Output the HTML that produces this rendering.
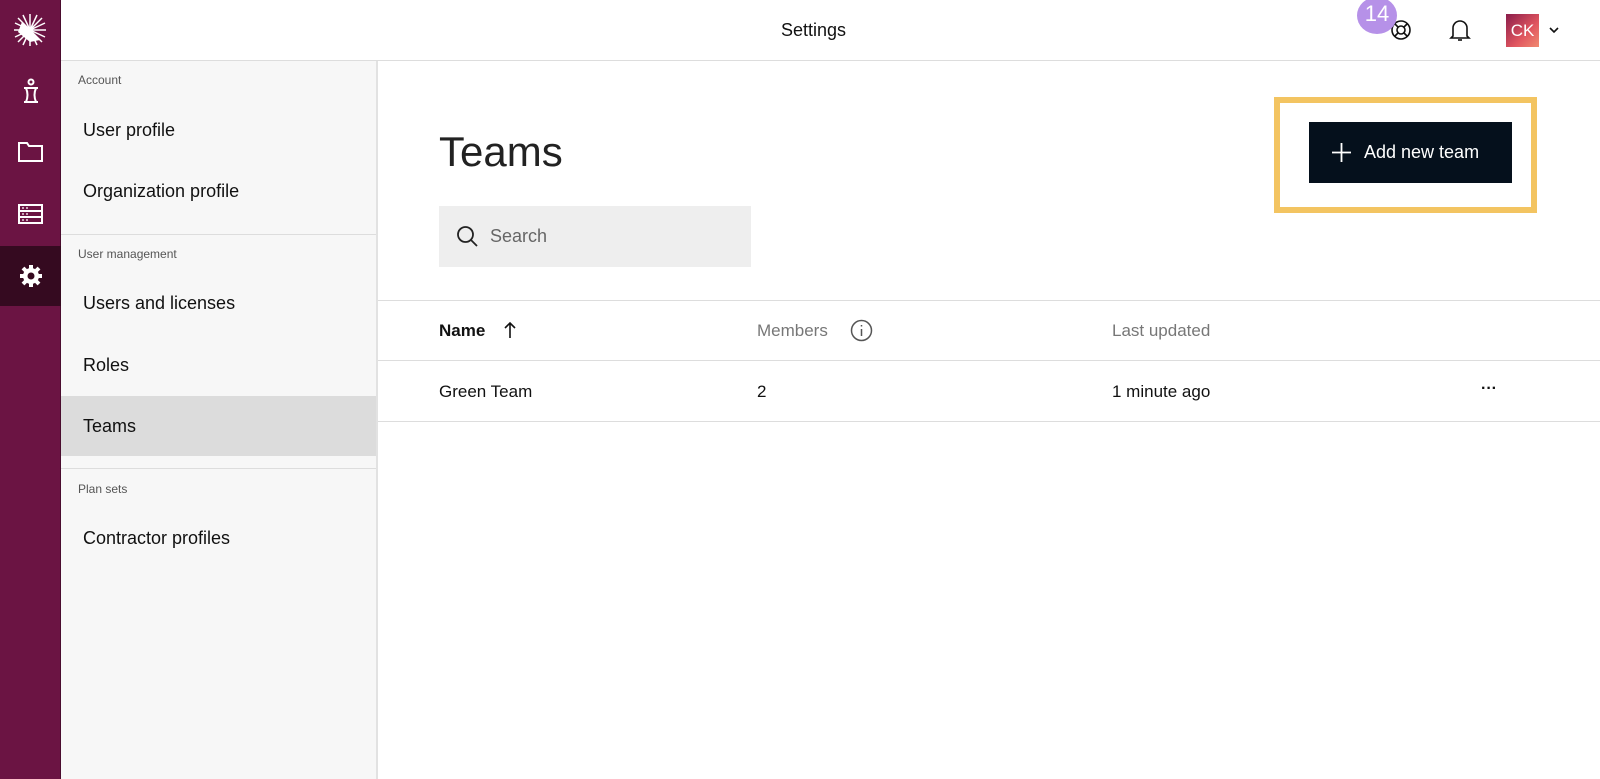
<!DOCTYPE html>
<html><head><style>
*{box-sizing:border-box;margin:0;padding:0}
body{width:1600px;height:779px;overflow:hidden;font-family:"Liberation Sans",sans-serif;background:#fff;position:relative;color:#111}
.rail{position:absolute;left:0;top:0;width:61px;height:779px;background:#6b1443;border-right:1px solid #4a0c2e}
.rail .act{position:absolute;left:0;top:246px;width:61px;height:60px;background:#350a20}
.top{position:absolute;left:61px;top:0;right:0;height:61px;border-bottom:1px solid #ddd;background:#fff}
.side{position:absolute;left:61px;top:61px;width:317px;bottom:0;background:#f7f7f7;border-right:2px solid #e2e2e2}
.sec{font-size:12px;color:#555;padding-left:17px;position:absolute}
.item{position:absolute;left:0;width:315px;height:60px;line-height:60px;padding-left:22px;font-size:18px;color:#111}
.hr{position:absolute;left:0;width:315px;height:1px;background:#ddd}
.abs{position:absolute}
</style></head><body>
<div class="rail">
<svg class="abs" style="left:12px;top:12px" width="36" height="36" viewBox="0 0 36 36"><g stroke="#fff" stroke-width="1.5">
<line x1="18" y1="2" x2="18" y2="34"/><line x1="2" y1="18" x2="34" y2="18"/><line x1="6" y1="6" x2="30" y2="30"/><line x1="30" y1="6" x2="6" y2="30"/><line x1="11" y1="3" x2="25" y2="33"/><line x1="25" y1="3" x2="11" y2="33"/><line x1="3" y1="11" x2="33" y2="25"/><line x1="3" y1="25" x2="33" y2="11"/></g><path d="M10 10 L28 28 L18 30 L6 20Z" fill="#fff"/></svg>
<svg class="abs" style="left:21px;top:78px" width="20" height="26" viewBox="0 0 20 26" fill="none" stroke="#fff" stroke-width="2"><circle cx="10" cy="4" r="2.5"/><path d="M3 10h14M3 24h14M5 10q3 7 0 14M15 10q-3 7 0 14"/></svg>
<svg class="abs" style="left:18px;top:142px" width="25" height="20" viewBox="0 0 25 20" fill="none" stroke="#fff" stroke-width="2"><path d="M1 1h8l2 3h13v15H1z"/></svg>
<svg class="abs" style="left:18px;top:204px" width="25" height="20" viewBox="0 0 25 20" fill="none" stroke="#fff" stroke-width="2"><rect x="1" y="1" width="23" height="18"/><path d="M1 7h23M1 13h23"/><path d="M4 4h2M8 4h2M4 10h2M8 10h2M4 16h2M8 16h2" stroke-width="1.2"/></svg>
<div class="act"></div>
<svg class="abs" style="left:19px;top:264px" width="24" height="24" viewBox="0 0 24 24"><g fill="#fff"><circle cx="12" cy="12" r="8"/><g stroke="#fff" stroke-width="4"><line x1="12" y1="1" x2="12" y2="23"/><line x1="1" y1="12" x2="23" y2="12"/><line x1="4" y1="4" x2="20" y2="20"/><line x1="20" y1="4" x2="4" y2="20"/></g></g><circle cx="12" cy="12" r="3.5" fill="#350a20"/></svg>
</div>
<div class="top">
<div class="abs" style="left:720px;top:20px;font-size:18px">Settings</div>
<svg class="abs" style="left:1329px;top:19px" width="22" height="22" viewBox="0 0 22 22" fill="none" stroke="#111" stroke-width="1.6"><circle cx="11" cy="11" r="9"/><circle cx="11" cy="11" r="4"/><path d="M5 5l3 3M17 5l-3 3M5 17l3-3M17 17l-3-3"/></svg>
<div class="abs" style="left:1296px;top:-3px;width:40px;height:37px;background:#b691e8;color:#fff;font-size:22px;text-align:center;line-height:34px;border-radius:50%">14</div>
<svg class="abs" style="left:1387px;top:17px" width="24" height="26" viewBox="0 0 24 26" fill="none" stroke="#111" stroke-width="1.6"><path d="M5 19V11a7 7 0 0114 0v8l2 2H3z"/><path d="M10 23h4"/></svg>
<div class="abs" style="left:1445px;top:14px;width:33px;height:33px;background:linear-gradient(135deg,#8a1d4b,#e0555f 60%,#f08a70);color:#fff;font-size:17px;line-height:33px;text-align:center">CK</div>
<svg class="abs" style="left:1488px;top:27px" width="10" height="7" viewBox="0 0 10 7" fill="none" stroke="#111" stroke-width="1.6"><path d="M1 1l4 4 4-4"/></svg>
</div>
<div class="side">
<div class="sec" style="top:12px">Account</div>
<div class="item" style="top:39px">User profile</div>
<div class="item" style="top:100px">Organization profile</div>
<div class="hr" style="top:173px"></div>
<div class="sec" style="top:186px">User management</div>
<div class="item" style="top:212px">Users and licenses</div>
<div class="item" style="top:274px">Roles</div>
<div class="item" style="top:335px;background:#dcdcdc">Teams</div>
<div class="hr" style="top:407px"></div>
<div class="sec" style="top:421px">Plan sets</div>
<div class="item" style="top:447px">Contractor profiles</div>
</div>
<div class="abs" style="left:439px;top:128px;font-size:42px;font-weight:300;color:#222">Teams</div>
<div class="abs" style="left:439px;top:206px;width:312px;height:61px;background:#eee"></div>
<svg class="abs" style="left:456px;top:225px" width="23" height="23" viewBox="0 0 23 23" fill="none" stroke="#222" stroke-width="1.8"><circle cx="9.5" cy="9.5" r="7.5"/><path d="M15 15l6 6"/></svg>
<div class="abs" style="left:490px;top:226px;font-size:18px;color:#666">Search</div>
<div class="abs" style="left:1274px;top:97px;width:263px;height:116px;border:6px solid #f3c461"></div>
<div class="abs" style="left:1309px;top:122px;width:203px;height:61px;background:#05101c;color:#fff;font-size:18px;line-height:61px;padding-left:55px">Add new team</div>
<svg class="abs" style="left:1332px;top:143px" width="19" height="19" viewBox="0 0 19 19" stroke="#fff" stroke-width="1.8"><path d="M9.5 0v19M0 9.5h19"/></svg>
<div class="abs" style="left:378px;top:300px;right:0;height:1px;background:#ddd"></div>
<div class="abs" style="left:378px;top:360px;right:0;height:1px;background:#ddd"></div>
<div class="abs" style="left:378px;top:421px;right:0;height:1px;background:#ddd"></div>
<div class="abs" style="left:439px;top:321px;font-size:17px;font-weight:bold">Name</div>
<svg class="abs" style="left:503px;top:321px" width="14" height="18" viewBox="0 0 14 18" fill="none" stroke="#111" stroke-width="1.6"><path d="M7 17V2M2 7l5-5 5 5"/></svg>
<div class="abs" style="left:757px;top:321px;font-size:17px;color:#777">Members</div>
<svg class="abs" style="left:850px;top:319px" width="23" height="23" viewBox="0 0 23 23" fill="none" stroke="#555" stroke-width="1.5"><circle cx="11.5" cy="11.5" r="10"/><path d="M11.5 10v7M11.5 6v1.5"/></svg>
<div class="abs" style="left:1112px;top:321px;font-size:17px;color:#777">Last updated</div>
<div class="abs" style="left:439px;top:382px;font-size:17px">Green Team</div>
<div class="abs" style="left:757px;top:382px;font-size:17px">2</div>
<div class="abs" style="left:1112px;top:382px;font-size:17px">1 minute ago</div>
<div class="abs" style="left:1481px;top:380px;font-size:16px;font-weight:bold">···</div>
</body></html>
